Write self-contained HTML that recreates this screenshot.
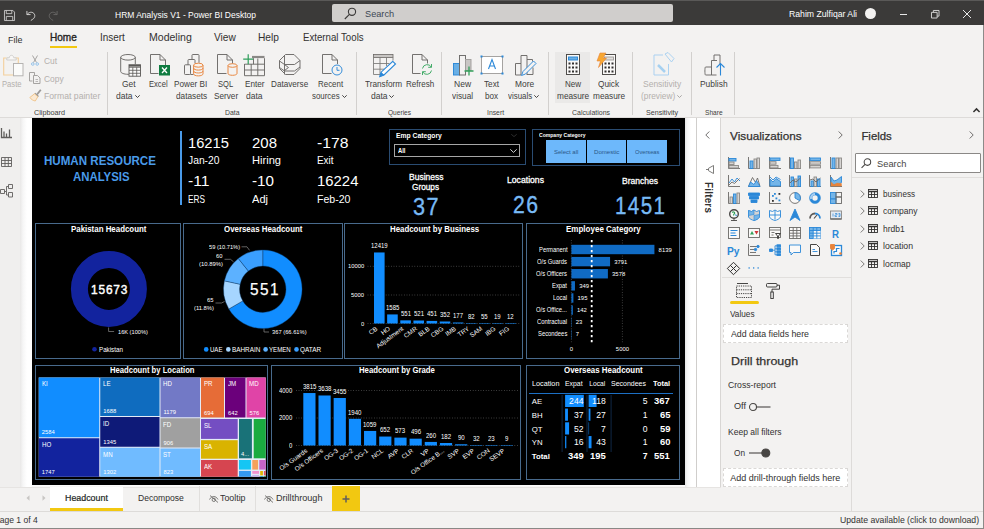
<!DOCTYPE html>
<html><head><meta charset="utf-8"><title>HRM Analysis V1 - Power BI Desktop</title>
<style>
*{box-sizing:border-box;margin:0;padding:0}
html,body{width:984px;height:529px;overflow:hidden;background:#f3f2f1;font-family:"Liberation Sans",sans-serif;color:#252423}
.a{position:absolute}
.t{position:absolute;white-space:nowrap;line-height:1;transform-origin:0 50%}
svg{position:absolute;overflow:visible}
.pn{position:absolute;border:1px solid #1d3f66}
</style></head><body>
<!-- sec_frame -->
<div class="a" style="left:0px;top:0px;width:984px;height:25px;background:#3b3a39;"></div>
<div class="a" style="left:0px;top:0px;width:984px;height:1px;background:#5a5958;"></div>
<div class="a" style="left:332px;top:4px;width:341px;height:18px;background:#d0cecc;border-radius:2px"></div>
<div class="a" style="left:0px;top:25px;width:984px;height:92px;background:#f3f2f1;"></div>
<div class="a" style="left:0px;top:117px;width:984px;height:1px;background:#dddbd9;"></div>
<div class="a" style="left:0px;top:118px;width:20px;height:369px;background:#f0efee;"></div>
<div class="a" style="left:20px;top:118px;width:12px;height:369px;background:linear-gradient(90deg,#e9e8e7 0,#f6f6f6 3px,#ffffff 7px);"></div>
<div class="a" style="left:32px;top:118px;width:653px;height:367px;background:#000;"></div>
<div class="a" style="left:685px;top:118px;width:11px;height:369px;background:linear-gradient(90deg,#e4e4e4 0,#f4f4f4 2px,#ffffff 6px);"></div>
<div class="a" style="left:32px;top:485px;width:653px;height:2px;background:linear-gradient(180deg,#fdfdfd,#f6f5f4);"></div>
<div class="a" style="left:696px;top:118px;width:24px;height:369px;background:#ffffff;border-left:1px solid #d0cecc"></div>
<div class="a" style="left:720px;top:118px;width:131px;height:393px;background:#f3f2f1;border-left:1px solid #d8d6d4"></div>
<div class="a" style="left:851px;top:118px;width:133px;height:393px;background:#f3f2f1;border-left:1px solid #dddbd9"></div>
<div class="a" style="left:0px;top:487px;width:721px;height:24px;background:#f3f2f1;"></div>
<div class="a" style="left:0px;top:511px;width:984px;height:18px;background:#f3f2f1;border-top:1px solid #dddbd9"></div>
<div class="a" style="left:0px;top:528px;width:984px;height:1px;background:#8a8886;"></div>
<div class="a" style="left:983px;top:25px;width:1px;height:504px;background:#8c8a88;"></div>
<!-- sec_title -->
<svg style="left:4px;top:9.5px" width="11" height="11" viewBox="0 0 12 12" fill="none" stroke="#d0cfce" stroke-width="0.95"><path d="M0.5 0.5h9.2l1.8 1.8v9.2h-11z"/><path d="M2.5 0.5v3.5h6v-3.5"/><path d="M2.5 11.5v-4.5h7v4.5"/></svg>
<svg style="left:26px;top:9.5px" width="10" height="11" viewBox="0 0 11 12" fill="none" stroke="#dddcdb" stroke-width="1"><path d="M1 1v4h4"/><path d="M1.2 5C3 2.2 6.5 1.6 8.5 3.6c2 2 1.3 5-1.2 6.6l-2 1.3"/></svg>
<svg style="left:48px;top:9.5px" width="10" height="11" viewBox="0 0 11 12" fill="none" stroke="#6a6968" stroke-width="1"><path d="M10 1v4h-4"/><path d="M9.8 5C8 2.2 4.5 1.6 2.5 3.6c-2 2-1.3 5 1.2 6.6l2 1.3"/></svg>
<span class="t" style="left:115.00px;top:10.00px;font-size:9.4px;color:#ffffff;transform:scaleX(0.9051);">HRM Analysis V1 - Power BI Desktop</span>
<svg style="left:344px;top:7px" width="13" height="13" viewBox="0 0 13 13" fill="none" stroke="#3b3a39" stroke-width="1.1"><circle cx="8" cy="4.8" r="3.6"/><path d="M5.4 7.4L0.8 12"/></svg>
<span class="t" style="left:365.20px;top:9.00px;font-size:9.8px;color:#3d4855;transform:scaleX(0.9388);">Search</span>
<span class="t" style="left:789.30px;top:9.00px;font-size:9.4px;color:#ffffff;transform:scaleX(0.9256);">Rahim Zulfiqar Ali</span>
<div class="a" style="left:864.8px;top:7.5px;width:11.6px;height:11.6px;border-radius:50%;background:#f3f2f1"></div>
<div class="a" style="left:900px;top:13.5px;width:7px;height:1px;background:#e8e8e8;"></div>
<svg style="left:931px;top:9.500px" width="8.500" height="8.500" viewBox="0 0 9 9" fill="none" stroke="#d8d8d8" stroke-width="1"><path d="M0.5 2.5h6v6h-6z"/><path d="M2.5 2.5v-2h6v6h-2"/></svg>
<svg style="left:963px;top:9.5px" width="8" height="8" viewBox="0 0 8 8" fill="none" stroke="#e8e8e8" stroke-width="1"><path d="M0 0L8 8M8 0L0 8"/></svg>
<span class="t" style="left:7.50px;top:35.00px;font-size:9.7px;color:#323130;transform:scaleX(0.9230);">File</span>
<span class="t" style="left:50.00px;top:33.00px;font-size:10.2px;color:#252423;transform:scaleX(0.9874);-webkit-text-stroke:0.35px #252423;">Home</span>
<div class="a" style="left:50px;top:45.5px;width:27px;height:2px;background:#f2c811;"></div>
<span class="t" style="left:100.00px;top:33.00px;font-size:10.2px;color:#323130;transform:scaleX(0.9752);">Insert</span>
<span class="t" style="left:148.50px;top:33.00px;font-size:10.2px;color:#323130;transform:scaleX(1.0337);">Modeling</span>
<span class="t" style="left:214.00px;top:33.00px;font-size:10.2px;color:#323130;">View</span>
<span class="t" style="left:258.00px;top:33.00px;font-size:10.2px;color:#323130;">Help</span>
<span class="t" style="left:303.00px;top:33.00px;font-size:10.2px;color:#323130;transform:scaleX(0.9502);">External Tools</span>
<!-- sec_ribbon -->
<svg style="left:3px;top:54px" width="21" height="23" viewBox="0 0 21 23" fill="none" stroke="#6b6967" stroke-width="0.95" ><path d="M3.500 4h-2.800v17h9.500M12.500 4h2.800v5" stroke="#f3cf9c" stroke-width="1.100"/><path d="M3.800 6v-2.200h2.400c0.300-3.300 4.300-3.300 4.600 0h2.400v2.200z" stroke="#cfcdcb" fill="#f8f7f6"/><rect x="10.500" y="9.500" width="9.500" height="12.300" stroke="#b3b1af" fill="#fbfbfa"/></svg>
<span class="t" style="left:2.00px;top:80.00px;font-size:9.3px;color:#b3b0ad;transform:scaleX(0.8244);">Paste</span>
<svg style="left:31px;top:55px" width="8" height="11" viewBox="0 0 8 11" fill="none" stroke="#6b6967" stroke-width="0.95" ><path d="M1.5 0.5l4 7M6.5 0.5l-4 7" stroke="#a19f9d"/><circle cx="1.8" cy="9" r="1.3" stroke="#8fc0ea"/><circle cx="6.2" cy="9" r="1.3" stroke="#8fc0ea"/></svg>
<span class="t" style="left:44.00px;top:57.00px;font-size:9.3px;color:#b3b0ad;transform:scaleX(0.9031);">Cut</span>
<svg style="left:29px;top:72px" width="12" height="12" viewBox="0 0 12 12" fill="none" stroke="#6b6967" stroke-width="0.95" ><path d="M0.5 0.5h5v2.5M0.5 0.5v8.5h3" stroke="#a19f9d"/><path d="M4.5 3.5h4l2.5 2.5v5.5h-6.5z" stroke="#a19f9d"/><path d="M6.5 7.5h2.5M6.5 9.5h2.5" stroke="#a19f9d" stroke-width="0.7"/></svg>
<span class="t" style="left:44.00px;top:75.00px;font-size:9.3px;color:#b3b0ad;transform:scaleX(0.9030);">Copy</span>
<svg style="left:29px;top:88.5px" width="13" height="13" viewBox="0 0 13 13" fill="none" stroke="#6b6967" stroke-width="0.95" ><path d="M11.800 0.800l-3.800 4.700" stroke="#9a9896" stroke-width="1.800"/><path d="M5.800 4.300l3.700 3.200" stroke="#9a9896" stroke-width="1.400"/><path d="M0.800 8.500l4.700-3.700 3.300 2.900-2.500 4.300c-2-0.300-4-1.500-5.500-3.500z" stroke="#f0c48a" fill="#fbe9d2"/></svg>
<span class="t" style="left:44.00px;top:92.00px;font-size:9.3px;color:#b3b0ad;transform:scaleX(0.9310);">Format painter</span>
<span class="t" style="left:34.00px;top:109.00px;font-size:7.4px;color:#403e3c;transform:scaleX(0.9821);">Clipboard</span>
<div class="a" style="left:107px;top:52px;width:1px;height:63px;background:#d2d0ce;"></div>
<div class="a" style="left:356px;top:52px;width:1px;height:63px;background:#d2d0ce;"></div>
<div class="a" style="left:441px;top:52px;width:1px;height:63px;background:#d2d0ce;"></div>
<div class="a" style="left:548px;top:52px;width:1px;height:63px;background:#d2d0ce;"></div>
<div class="a" style="left:632px;top:52px;width:1px;height:63px;background:#d2d0ce;"></div>
<div class="a" style="left:690.5px;top:52px;width:1px;height:63px;background:#d2d0ce;"></div>
<div class="a" style="left:734px;top:52px;width:1px;height:63px;background:#d2d0ce;"></div>
<svg style="left:120px;top:54px" width="21" height="23" viewBox="0 0 21 23" fill="none" stroke="#6b6967" stroke-width="0.95" ><ellipse cx="8" cy="3.300" rx="7.300" ry="2.800"/><path d="M0.700 3.300v14.200c0 1.500 3.300 2.800 7.300 2.800h0.800M15.300 3.300v7"/><rect x="9" y="10.700" width="11.500" height="11.500" fill="#fbfbfb" stroke="#5a5856" stroke-width="0.900"/><path d="M9 13.300h11.500M9 16.300h11.500M9 19.300h11.500M12.800 13.300v9M16.700 13.300v9" stroke="#5a5856" stroke-width="0.800"/><path d="M9 11.800h11.500" stroke="#5a5856" stroke-width="1.600"/></svg>
<span class="t" style="left:122.00px;top:80.00px;font-size:9.3px;color:#403e3c;transform:scaleX(0.9054);">Get</span>
<span class="t" style="left:116.00px;top:92.00px;font-size:9.3px;color:#403e3c;transform:scaleX(0.9165);">data</span>
<svg style="left:134.5px;top:95px" width="5" height="3" viewBox="0 0 5 3" fill="none" stroke="#323130" stroke-width="0.9"><path d="M0.3 0.3L2.5 2.5L4.7 0.3"/></svg>
<svg style="left:150px;top:54px" width="21" height="22" viewBox="0 0 21 22" fill="none" stroke="#6b6967" stroke-width="0.95" ><path d="M0.5 0.5h9.5l5.5 5.5v5M0.5 0.5v19h8M10 0.5v5.5h5.5"/><rect x="9" y="11" width="11" height="10.5" fill="#107c41" stroke="none"/><path d="M12 13.5l5 5.5M17 13.5l-5 5.5" stroke="#fff" stroke-width="1.3"/></svg>
<span class="t" style="left:148.50px;top:80.00px;font-size:9.3px;color:#403e3c;transform:scaleX(0.8179);">Excel</span>
<svg style="left:184px;top:54px" width="20" height="23" viewBox="0 0 20 23" fill="none" stroke="#6b6967" stroke-width="0.95" ><rect x="0.500" y="10.800" width="6" height="9.700" rx="0.800"/><path d="M4 10.800v-4.500c0-0.500 0.300-0.800 0.800-0.800h5.400c0.500 0 0.800 0.300 0.800 0.800v3"/><path d="M8 5.500v-4.200c0-0.500 0.300-0.800 0.800-0.800h5.400c0.500 0 0.800 0.300 0.800 0.800v7.500"/><path d="M6.500 20.500h3"/><ellipse cx="14.300" cy="11.200" rx="4.700" ry="2" stroke="#e8833a" fill="#f8f1ea"/><path d="M9.600 11.200v8.700c0 1.100 2.100 2 4.700 2s4.700-0.900 4.700-2v-8.700M9.600 14.100c0 1.100 2.100 2 4.700 2s4.700-0.900 4.700-2M9.600 17c0 1.100 2.100 2 4.700 2s4.700-0.900 4.700-2" stroke="#e8833a"/></svg>
<span class="t" style="left:174.00px;top:80.00px;font-size:9.3px;color:#403e3c;transform:scaleX(0.8793);">Power BI</span>
<span class="t" style="left:176.00px;top:92.00px;font-size:9.3px;color:#403e3c;transform:scaleX(0.8865);">datasets</span>
<svg style="left:217px;top:54px" width="21" height="22" viewBox="0 0 21 22" fill="none" stroke="#6b6967" stroke-width="0.95" ><path d="M0.500 0.500h9.500l5.500 5.500v3.500M0.500 0.500v19h9M10 0.500v5.500h5.500"/><ellipse cx="15.500" cy="11.500" rx="4.500" ry="1.800" stroke="#e8833a"/><path d="M11 11.500v8c0 1 2 1.800 4.500 1.800s4.500-0.800 4.500-1.800v-8" stroke="#e8833a"/></svg>
<span class="t" style="left:218.00px;top:80.00px;font-size:9.3px;color:#403e3c;transform:scaleX(0.8104);">SQL</span>
<span class="t" style="left:213.50px;top:92.00px;font-size:9.3px;color:#403e3c;transform:scaleX(0.8809);">Server</span>
<svg style="left:243px;top:53.5px" width="22" height="23" viewBox="0 0 22 23" fill="none" stroke="#6b6967" stroke-width="0.95" ><path d="M9 3h12.500" stroke="#8a8886" stroke-width="2.200"/><path d="M1.500 10v11.700h20v-17.500M1.500 10.200h20M1.500 16h20M8.200 10v11.700M14.800 4.500v17.200M10.500 4.200v6"/><path d="M5.200 0.200v10M0.200 5.200h10" stroke="#2e9e5b" stroke-width="1.200"/></svg>
<span class="t" style="left:245.00px;top:80.00px;font-size:9.3px;color:#403e3c;transform:scaleX(0.8820);">Enter</span>
<span class="t" style="left:246.00px;top:92.00px;font-size:9.3px;color:#403e3c;transform:scaleX(0.9165);">data</span>
<svg style="left:279px;top:54px" width="22" height="22" viewBox="0 0 22 22" fill="none" stroke="#6b6967" stroke-width="0.95" ><path d="M6.500 0.500h8.500l6 6v8l-6 6h-8.500l-6-6v-8z"/><path d="M0.500 7l5 3.500h10l5.500-4M0.500 13.500l5 3.500h10l5.500-4M5.500 1v19.500M5.500 10.500l4 3-4 3"/></svg>
<span class="t" style="left:271.00px;top:80.00px;font-size:9.3px;color:#403e3c;transform:scaleX(0.8776);">Dataverse</span>
<svg style="left:322px;top:54px" width="21" height="22" viewBox="0 0 21 22" fill="none" stroke="#6b6967" stroke-width="0.95" ><path d="M0.500 0.500h9.500l5.500 5.500v4M0.500 0.500v19h9M10 0.500v5.500h5.500"/><circle cx="15" cy="16" r="5" stroke="#2b88d8" fill="#f3f2f1"/><path d="M15 13v3.300h2.500" stroke="#2b88d8"/></svg>
<span class="t" style="left:318.00px;top:80.00px;font-size:9.3px;color:#403e3c;transform:scaleX(0.8530);">Recent</span>
<span class="t" style="left:312.00px;top:92.00px;font-size:9.3px;color:#403e3c;transform:scaleX(0.8491);">sources</span>
<svg style="left:341.5px;top:95px" width="5" height="3" viewBox="0 0 5 3" fill="none" stroke="#323130" stroke-width="0.9"><path d="M0.3 0.3L2.5 2.5L4.7 0.3"/></svg>
<svg style="left:373px;top:54px" width="23" height="23" viewBox="0 0 23 23" fill="none" stroke="#6b6967" stroke-width="0.95" ><rect x="0.500" y="0.500" width="19.500" height="3" fill="#c8c6c4" stroke="#6b6967" stroke-width="0.800"/><path d="M0.500 3.500v17h8.500M0.500 9.500h16M0.500 15.200h11M7 3.500v17M13.500 3.500v8.500M20 3.500v3" stroke="#7a7876" stroke-width="0.850"/><path d="M19.800 7.300l2.700 2.700-11.500 11-4.200 1.500 1.300-4.300z" stroke="#2b88d8" stroke-width="1.100" fill="#fdfdfd"/><path d="M8.100 18.200l2.900 2.800-4.200 1.500z" fill="#2b88d8" stroke="#2b88d8" stroke-width="0.600"/></svg>
<span class="t" style="left:365.00px;top:80.00px;font-size:9.3px;color:#403e3c;transform:scaleX(0.8852);">Transform</span>
<span class="t" style="left:371.00px;top:92.00px;font-size:9.3px;color:#403e3c;transform:scaleX(0.9165);">data</span>
<svg style="left:389px;top:95px" width="5" height="3" viewBox="0 0 5 3" fill="none" stroke="#323130" stroke-width="0.9"><path d="M0.3 0.3L2.5 2.5L4.7 0.3"/></svg>
<svg style="left:412px;top:54px" width="21" height="22" viewBox="0 0 21 22" fill="none" stroke="#6b6967" stroke-width="0.95" ><path d="M0.500 0.500h9.500l5.500 5.500v3.500M0.500 0.500v19h8M10 0.500v5.500h5.500"/><path d="M10.500 14.500a4.700 4.700 0 0 1 8.700-1.500M19.500 16.500a4.700 4.700 0 0 1-8.700 1.500M19.500 10v3.300h-3.300M10.500 21v-3.300h3.300" stroke="#3aa862" stroke-width="0.950"/></svg>
<span class="t" style="left:406.00px;top:80.00px;font-size:9.3px;color:#403e3c;transform:scaleX(0.8645);">Refresh</span>
<span class="t" style="left:225.00px;top:109.00px;font-size:7.4px;color:#403e3c;transform:scaleX(0.9308);">Data</span>
<span class="t" style="left:388.00px;top:109.00px;font-size:7.4px;color:#403e3c;transform:scaleX(0.8907);">Queries</span>
<svg style="left:453px;top:54px" width="21" height="22" viewBox="0 0 21 22" fill="none" stroke="#6b6967" stroke-width="0.95" ><rect x="0.500" y="9.500" width="6" height="11.500" fill="#69afe5" stroke="#2b88d8"/><rect x="6.500" y="1.500" width="6" height="19.500" fill="#f3f2f1"/><rect x="12.500" y="5.500" width="5.500" height="11" fill="#c8c6c4" stroke="#a19f9d"/><path d="M16 12.500v9M11.500 17h9" stroke="#33a05a" stroke-width="1.300"/></svg>
<span class="t" style="left:454.00px;top:80.00px;font-size:9.3px;color:#403e3c;transform:scaleX(0.9187);">New</span>
<span class="t" style="left:452.00px;top:92.00px;font-size:9.3px;color:#403e3c;transform:scaleX(0.8880);">visual</span>
<svg style="left:480px;top:55px" width="24" height="20" viewBox="0 0 24 20" fill="none" stroke="#6b6967" stroke-width="0.95" ><rect x="1.500" y="1.500" width="21" height="17" fill="#fff" stroke="#a19f9d"/><path d="M8.500 14l3.500-9.500 3.500 9.500M9.700 11h4.600" stroke="#2b88d8" stroke-width="1.100"/><g fill="#2b88d8" stroke="none"><rect x="0.500" y="0.500" width="2" height="2"/><rect x="21.500" y="0.500" width="2" height="2"/><rect x="0.500" y="17.500" width="2" height="2"/><rect x="21.500" y="17.500" width="2" height="2"/></g></svg>
<span class="t" style="left:484.00px;top:80.00px;font-size:9.3px;color:#403e3c;transform:scaleX(0.8842);">Text</span>
<span class="t" style="left:485.00px;top:92.00px;font-size:9.3px;color:#403e3c;transform:scaleX(0.8717);">box</span>
<svg style="left:515px;top:54px" width="22" height="22" viewBox="0 0 22 22" fill="none" stroke="#6b6967" stroke-width="0.95" ><path d="M0.500 9.500h5.500v11.500h-5.500zM6 9.500v-8h6v19.500M12 5.500h5.500v2"/><path d="M18.500 7l2.500 2.500-10.500 10.500-4 1.500 1.500-4z" stroke="#2b88d8" fill="#f3f2f1"/><path d="M12 20.500h6v-7" /></svg>
<span class="t" style="left:515.00px;top:80.00px;font-size:9.3px;color:#403e3c;transform:scaleX(0.9016);">More</span>
<span class="t" style="left:508.00px;top:92.00px;font-size:9.3px;color:#403e3c;transform:scaleX(0.8489);">visuals</span>
<svg style="left:533.5px;top:95px" width="5" height="3" viewBox="0 0 5 3" fill="none" stroke="#323130" stroke-width="0.9"><path d="M0.3 0.3L2.5 2.5L4.7 0.3"/></svg>
<span class="t" style="left:487.00px;top:109.00px;font-size:7.4px;color:#403e3c;transform:scaleX(0.9217);">Insert</span>
<div class="a" style="left:555px;top:52px;width:35px;height:51px;background:#eae9e8;"></div>
<svg style="left:566px;top:54px" width="14" height="21" viewBox="0 0 14 21" fill="none" stroke="#6b6967" stroke-width="0.95" ><rect x="0.500" y="0.500" width="13" height="20" fill="#faf9f8" stroke="#484644"/><rect x="2.500" y="3" width="9" height="3" fill="#69afe5" stroke="#2b88d8"/><g fill="#323130" stroke="none"><rect x="2.500" y="8.500" width="2" height="2"/><rect x="6" y="8.500" width="2" height="2"/><rect x="9.500" y="8.500" width="2" height="2"/><rect x="2.500" y="12.500" width="2" height="2"/><rect x="6" y="12.500" width="2" height="2"/><rect x="9.500" y="12.500" width="2" height="2"/><rect x="2.500" y="16.500" width="2" height="2"/><rect x="6" y="16.500" width="2" height="2"/><rect x="9.500" y="16.500" width="2" height="2"/></g></svg>
<span class="t" style="left:565.00px;top:80.00px;font-size:9.3px;color:#403e3c;transform:scaleX(0.8647);">New</span>
<span class="t" style="left:557.00px;top:92.00px;font-size:9.3px;color:#403e3c;transform:scaleX(0.8892);">measure</span>
<svg style="left:602px;top:54px" width="14" height="21" viewBox="0 0 14 21" fill="none" stroke="#6b6967" stroke-width="0.95" ><rect x="0.500" y="0.500" width="13" height="20" fill="#faf9f8" stroke="#484644"/><rect x="2.500" y="3" width="9" height="3" fill="#e1dfdd" stroke="#a19f9d"/><g fill="#323130" stroke="none"><rect x="2.500" y="8.500" width="2" height="2"/><rect x="6" y="8.500" width="2" height="2"/><rect x="9.500" y="8.500" width="2" height="2"/><rect x="2.500" y="12.500" width="2" height="2"/><rect x="6" y="12.500" width="2" height="2"/><rect x="9.500" y="12.500" width="2" height="2"/><rect x="2.500" y="16.500" width="2" height="2"/><rect x="6" y="16.500" width="2" height="2"/><rect x="9.500" y="16.500" width="2" height="2"/></g></svg>
<svg style="left:596px;top:53px" width="11" height="15" viewBox="0 0 11 15" fill="none" stroke="#6b6967" stroke-width="0.95" ><path d="M4 0h6l-3 5h3.500l-8 9.500 2-6.500h-3.500z" fill="#f7a833" stroke="#e8833a" stroke-width="0.600"/></svg>
<span class="t" style="left:598.00px;top:80.00px;font-size:9.3px;color:#403e3c;transform:scaleX(0.8882);">Quick</span>
<span class="t" style="left:593.00px;top:92.00px;font-size:9.3px;color:#403e3c;transform:scaleX(0.8892);">measure</span>
<span class="t" style="left:572.00px;top:109.00px;font-size:7.4px;color:#403e3c;transform:scaleX(0.9459);">Calculations</span>
<svg style="left:653px;top:53px" width="22" height="23" viewBox="0 0 22 23" fill="none" stroke="#6b6967" stroke-width="0.95" ><path d="M1 2h9M1 2v20h14.500v-11" stroke="#a6d0f0"/><path d="M12 1l3-1.500 6 6-2.500 3.500z" stroke="#a6d0f0"/><path d="M5 12l7 7" stroke="#a6d0f0" stroke-width="2.500"/></svg>
<span class="t" style="left:643.00px;top:80.00px;font-size:9.3px;color:#b3b0ad;transform:scaleX(0.9126);">Sensitivity</span>
<span class="t" style="left:640.50px;top:92.00px;font-size:9.3px;color:#b3b0ad;transform:scaleX(0.8940);">(preview)</span>
<svg style="left:677px;top:95px" width="5" height="3" viewBox="0 0 5 3" fill="none" stroke="#a19f9d" stroke-width="0.9"><path d="M0.3 0.3L2.5 2.5L4.7 0.3"/></svg>
<span class="t" style="left:646.00px;top:109.00px;font-size:7.4px;color:#403e3c;transform:scaleX(0.9639);">Sensitivity</span>
<svg style="left:705px;top:54px" width="21" height="22" viewBox="0 0 21 22" fill="none" stroke="#6b6967" stroke-width="0.95" ><path d="M0.500 13h6v8h-6c-0.800 0-0.800-8 0-8zM6.500 13v-6.500h5.500M9 6.500v-5.500h6v9M6.500 21h5"/><path d="M15.500 21.500v-12M11.500 13.500l4-4 4 4" stroke="#2b88d8" stroke-width="1.100"/></svg>
<span class="t" style="left:699.50px;top:80.00px;font-size:9.3px;color:#403e3c;transform:scaleX(0.9065);">Publish</span>
<span class="t" style="left:704.50px;top:109.00px;font-size:7.4px;color:#403e3c;transform:scaleX(0.8892);">Share</span>
<svg style="left:973.300px;top:107.800px" width="7" height="4.400" viewBox="0 0 8 5" fill="none" stroke="#323130" stroke-width="1.700"><path d="M0.500 4.500L4 1l3.500 3.500"/></svg>
<!-- sec_dash1 -->
<svg style="left:1px;top:128px" width="11" height="10" viewBox="0 0 11 10" fill="none" stroke="#5f5d5b" stroke-width="1"><path d="M0.500 0v9.500h10.500M3 9.500v-6M5.500 9.500v-4M8.500 9.500v-8" stroke-width="1.300"/></svg>
<svg style="left:1px;top:157px" width="11" height="10" viewBox="0 0 11 10" fill="none" stroke="#605e5c" stroke-width="0.900"><path d="M0.500 0.500h10v9h-10zM0.500 3.500h10M0.500 6.500h10M4 0.500v9M7.300 0.500v9"/></svg>
<svg style="left:0px;top:184px" width="13" height="14" viewBox="0 0 13 14" fill="none" stroke="#605e5c" stroke-width="0.900"><path d="M0.500 5.500h4v4h-4zM8.500 0.500h4v4h-4zM8.500 8.500h4v4.500h-4zM4.500 7.500h2v-5h2M6.500 7.500v3.500h2"/></svg>
<span class="t" style="left:43.75px;top:155.00px;font-size:12.2px;color:#4a9bea;font-weight:bold;transform:scaleX(0.9501);">HUMAN RESOURCE</span>
<span class="t" style="left:73.25px;top:171.00px;font-size:12.2px;color:#4a9bea;font-weight:bold;transform:scaleX(0.9333);">ANALYSIS</span>
<div class="a" style="left:180.3px;top:131px;width:2px;height:73.5px;background:#4a9bea;"></div>
<span class="t" style="left:187.50px;top:136.00px;font-size:14.6px;color:#fff;transform:scaleX(1.0083);">16215</span>
<span class="t" style="left:187.50px;top:155.00px;font-size:11px;color:#fff;transform:scaleX(0.9366);">Jan-20</span>
<span class="t" style="left:187.50px;top:174.00px;font-size:14.6px;color:#fff;transform:scaleX(1.0723);">-11</span>
<span class="t" style="left:187.50px;top:194.00px;font-size:11px;color:#fff;transform:scaleX(0.7516);">ERS</span>
<span class="t" style="left:251.50px;top:136.00px;font-size:14.6px;color:#fff;transform:scaleX(1.0247);">208</span>
<span class="t" style="left:251.50px;top:155.00px;font-size:11px;color:#fff;transform:scaleX(1.0094);">Hiring</span>
<span class="t" style="left:251.50px;top:174.00px;font-size:14.6px;color:#fff;transform:scaleX(1.0408);">-10</span>
<span class="t" style="left:251.50px;top:194.00px;font-size:11px;color:#fff;transform:scaleX(1.0064);">Adj</span>
<span class="t" style="left:316.50px;top:136.00px;font-size:14.6px;color:#fff;transform:scaleX(1.0762);">-178</span>
<span class="t" style="left:316.50px;top:155.00px;font-size:11px;color:#fff;transform:scaleX(0.8998);">Exit</span>
<span class="t" style="left:316.50px;top:174.00px;font-size:14.6px;color:#fff;transform:scaleX(1.0206);">16224</span>
<span class="t" style="left:316.50px;top:194.00px;font-size:11px;color:#fff;transform:scaleX(0.9612);">Feb-20</span>
<div class="a" style="left:389px;top:129px;width:137px;height:35.500px;border:1px solid #2a4c72"></div>
<span class="t" style="left:396.00px;top:133.00px;font-size:6.8px;color:#fff;font-weight:bold;transform:scaleX(0.9943);">Emp Category</span>
<svg style="left:511px;top:133.500px" width="6" height="3" viewBox="0 0 6 3" fill="none" stroke="#3a3a3a" stroke-width="0.800"><path d="M0.300 0.300L3 2.600L5.700 0.300"/></svg>
<div class="a" style="left:394.300px;top:143.800px;width:125.700px;height:13.400px;border:1px solid #a6a6a6"></div>
<span class="t" style="left:398.20px;top:148.00px;font-size:6.5px;color:#fff;font-weight:bold;transform:scaleX(0.9029);">All</span>
<svg style="left:509.500px;top:148.500px" width="7" height="4" viewBox="0 0 7 4" fill="none" stroke="#e8e8e8" stroke-width="0.900"><path d="M0.300 0.300L3.500 3.400L6.700 0.300"/></svg>
<div class="a" style="left:532px;top:129px;width:148px;height:37.300px;border:1px solid #2a4c72"></div>
<span class="t" style="left:539.00px;top:133.00px;font-size:5px;color:#fff;font-weight:bold;transform:scaleX(1.0142);">Company Category</span>
<div class="a" style="left:546px;top:140px;width:40px;height:23.3px;background:#6db8fb;"></div>
<span class="t" style="left:553.75px;top:150.00px;font-size:5.6px;color:#2b5787;transform:scaleX(1.0733);">Select all</span>
<div class="a" style="left:586.8px;top:140px;width:39.7px;height:23.3px;background:#6db8fb;"></div>
<span class="t" style="left:593.90px;top:150.00px;font-size:5.6px;color:#2b5787;transform:scaleX(1.0877);">Domestic</span>
<div class="a" style="left:627.3px;top:140px;width:39.7px;height:23.3px;background:#6db8fb;"></div>
<span class="t" style="left:634.90px;top:150.00px;font-size:5.6px;color:#2b5787;transform:scaleX(1.0178);">Overseas</span>
<span class="t" style="left:408.75px;top:173.00px;font-size:8.4px;color:#fff;transform:scaleX(1.0152);-webkit-text-stroke:0.280px #fff;">Business</span>
<span class="t" style="left:412.20px;top:183.00px;font-size:8.4px;color:#fff;transform:scaleX(0.9831);-webkit-text-stroke:0.280px #fff;">Groups</span>
<span class="t" style="left:413.25px;top:195.00px;font-size:24px;color:#78baf5;transform:scaleX(0.9012);-webkit-text-stroke:0.350px #78baf5;letter-spacing:1.6px;">37</span>
<span class="t" style="left:506.90px;top:176.00px;font-size:8.4px;color:#fff;transform:scaleX(1.0320);-webkit-text-stroke:0.280px #fff;">Locations</span>
<span class="t" style="left:513.00px;top:193.00px;font-size:24px;color:#78baf5;transform:scaleX(0.8835);-webkit-text-stroke:0.350px #78baf5;letter-spacing:1.6px;">26</span>
<span class="t" style="left:622.00px;top:177.00px;font-size:8.4px;color:#fff;transform:scaleX(1.0174);-webkit-text-stroke:0.280px #fff;">Branches</span>
<span class="t" style="left:614.60px;top:194.00px;font-size:24px;color:#78baf5;transform:scaleX(0.8592);-webkit-text-stroke:0.350px #78baf5;letter-spacing:1.6px;">1451</span>
<!-- sec_dash2 -->
<div class="a" style="left:35px;top:223px;width:146px;height:136px;border:1px solid #486a8c"></div>
<span class="t" style="left:71.40px;top:225.00px;font-size:8.3px;color:#fff;font-weight:bold;transform:scaleX(0.9512);">Pakistan Headcount</span>
<svg style="left:0;top:0" width="984" height="529"><circle cx="108.900" cy="289" r="29.500" fill="none" stroke="#12239e" stroke-width="17"/><path d="M108.600 327.500v4h5.500" fill="none" stroke="#8a8a8a" stroke-width="0.700"/><circle cx="94.500" cy="349.300" r="2.300" fill="#12239e"/></svg>
<span class="t" style="left:90.65px;top:284.00px;font-size:12.6px;color:#fff;transform:scaleX(0.9430);-webkit-text-stroke:0.45px #fff;letter-spacing:0.9px;">15673</span>
<span class="t" style="left:117.70px;top:330.00px;font-size:5.6px;color:#fff;transform:scaleX(1.0099);">16K (100%)</span>
<span class="t" style="left:99.00px;top:347.00px;font-size:6.6px;color:#fff;transform:scaleX(0.9446);">Pakistan</span>
<div class="a" style="left:183px;top:223px;width:160px;height:136px;border:1px solid #486a8c"></div>
<span class="t" style="left:224.20px;top:225.00px;font-size:8.3px;color:#fff;font-weight:bold;transform:scaleX(0.9504);">Overseas Headcount</span>
<svg style="left:0;top:0" width="984" height="529"><path d="M262.80 249.90A39.3 39.3 0 1 1 228.84 308.98L242.75 300.88A23.2 23.2 0 1 0 262.80 266.00Z" fill="#118dff" stroke="#0b3d6e" stroke-width="0.400"/><path d="M228.84 308.98A39.3 39.3 0 0 1 224.39 280.86L240.13 284.28A23.2 23.2 0 0 0 242.75 300.88Z" fill="#a6d5ff" stroke="#0b3d6e" stroke-width="0.400"/><path d="M224.39 280.86A39.3 39.3 0 0 1 238.31 258.46L248.34 271.06A23.2 23.2 0 0 0 240.13 284.28Z" fill="#5cb1ff" stroke="#0b3d6e" stroke-width="0.400"/><path d="M238.31 258.46A39.3 39.3 0 0 1 262.80 249.90L262.80 266.00A23.2 23.2 0 0 0 248.34 271.06Z" fill="#3a9fff" stroke="#0b3d6e" stroke-width="0.400"/><g fill="none" stroke="#8a8a8a" stroke-width="0.700"><path d="M241.500 246.800h5.500l2.500 3.500"/><path d="M224.500 259.300h6l3 2.500"/><path d="M215.500 303h6l3-1.500"/><path d="M264 328.500v3.500h5"/></g><circle cx="206.2" cy="349.400" r="2.300" fill="#118dff"/><circle cx="228.3" cy="349.400" r="2.300" fill="#a6d5ff"/><circle cx="265.6" cy="349.400" r="2.300" fill="#5cb1ff"/><circle cx="296.5" cy="349.400" r="2.300" fill="#3a9fff"/></svg>
<span class="t" style="left:250.45px;top:281.00px;font-size:17.3px;color:#fff;transform:scaleX(0.8911);-webkit-text-stroke:0.25px #fff;letter-spacing:1.6px;">551</span>
<span class="t" style="left:209.00px;top:245.00px;font-size:5.6px;color:#fff;transform:scaleX(1.0181);">59 (10.71%)</span>
<span class="t" style="left:215.75px;top:254.00px;font-size:5.6px;color:#fff;transform:scaleX(1.0387);">60</span>
<span class="t" style="left:198.80px;top:262.00px;font-size:5.6px;color:#fff;transform:scaleX(1.0514);">(10.89%)</span>
<span class="t" style="left:207.15px;top:298.00px;font-size:5.6px;color:#fff;transform:scaleX(1.0387);">65</span>
<span class="t" style="left:193.80px;top:306.00px;font-size:5.6px;color:#fff;transform:scaleX(1.0374);">(11.8%)</span>
<span class="t" style="left:271.70px;top:330.00px;font-size:5.6px;color:#fff;transform:scaleX(1.0303);">367 (66.61%)</span>
<span class="t" style="left:209.50px;top:347.00px;font-size:6.6px;color:#fff;transform:scaleX(0.9177);">UAE</span>
<span class="t" style="left:231.60px;top:347.00px;font-size:6.6px;color:#fff;transform:scaleX(0.9644);">BAHRAIN</span>
<span class="t" style="left:269.20px;top:347.00px;font-size:6.6px;color:#fff;transform:scaleX(0.9254);">YEMEN</span>
<span class="t" style="left:299.80px;top:347.00px;font-size:6.6px;color:#fff;transform:scaleX(0.9709);">QATAR</span>
<div class="a" style="left:344px;top:223px;width:179px;height:136px;border:1px solid #486a8c"></div>
<span class="t" style="left:389.65px;top:225.00px;font-size:8.3px;color:#fff;font-weight:bold;transform:scaleX(0.9485);">Headcount by Business</span>
<svg style="left:0;top:0" width="984" height="529"><g stroke="#6a6a6a" stroke-width="0.700" stroke-dasharray="0.800 1.800"><path d="M367.600 266.3H521"/><path d="M367.600 295H521"/><path d="M367.600 323.5H521"/></g><rect x="374.00" y="252.46" width="10.6" height="71.04" fill="#118dff"/><rect x="387.14" y="314.43" width="10.6" height="9.07" fill="#118dff"/><rect x="400.28" y="320.35" width="10.6" height="3.15" fill="#118dff"/><rect x="413.42" y="320.52" width="10.6" height="2.98" fill="#118dff"/><rect x="426.56" y="320.92" width="10.6" height="2.58" fill="#118dff"/><rect x="439.70" y="321.49" width="10.6" height="2.01" fill="#118dff"/><rect x="452.84" y="322.49" width="10.6" height="1.01" fill="#118dff"/><rect x="465.98" y="323.00" width="10.6" height="0.50" fill="#118dff"/><rect x="479.12" y="323.00" width="10.6" height="0.50" fill="#118dff"/><rect x="492.26" y="323.00" width="10.6" height="0.50" fill="#118dff"/><rect x="505.40" y="323.00" width="10.6" height="0.50" fill="#118dff"/></svg>
<span class="t" style="left:370.98px;top:243.00px;font-size:6.5px;color:#fff;transform:scaleX(0.9200);">12419</span>
<span class="t" style="left:385.79px;top:305.00px;font-size:6.5px;color:#fff;transform:scaleX(0.9200);">1585</span>
<span class="t" style="left:400.59px;top:311.00px;font-size:6.5px;color:#fff;transform:scaleX(0.9200);">551</span>
<span class="t" style="left:413.73px;top:311.00px;font-size:6.5px;color:#fff;transform:scaleX(0.9200);">521</span>
<span class="t" style="left:426.87px;top:311.00px;font-size:6.5px;color:#fff;transform:scaleX(0.9200);">451</span>
<span class="t" style="left:440.01px;top:312.00px;font-size:6.5px;color:#fff;transform:scaleX(0.9200);">352</span>
<span class="t" style="left:453.15px;top:313.00px;font-size:6.5px;color:#fff;transform:scaleX(0.9200);">177</span>
<span class="t" style="left:467.95px;top:314.00px;font-size:6.5px;color:#fff;transform:scaleX(0.9200);">82</span>
<span class="t" style="left:481.09px;top:314.00px;font-size:6.5px;color:#fff;transform:scaleX(0.9200);">55</span>
<span class="t" style="left:494.23px;top:314.00px;font-size:6.5px;color:#fff;transform:scaleX(0.9200);">19</span>
<span class="t" style="left:507.37px;top:314.00px;font-size:6.5px;color:#fff;transform:scaleX(0.9200);">12</span>
<span class="t" style="left:347.96px;top:263.00px;font-size:6.2px;color:#fff;transform:scaleX(0.9400);">10000</span>
<span class="t" style="left:351.23px;top:292.00px;font-size:6.2px;color:#fff;transform:scaleX(0.9400);">5000</span>
<span class="t" style="left:361.03px;top:321.00px;font-size:6.2px;color:#fff;transform:scaleX(0.9400);">0</span>
<span class="t" style="left:367.94px;top:325.30px;font-size:6.400px;color:#fff;transform-origin:100% 50%;transform:rotate(-36deg)">CB</span>
<span class="t" style="left:380.38px;top:325.30px;font-size:6.400px;color:#fff;transform-origin:100% 50%;transform:rotate(-36deg)">HO</span>
<span class="t" style="left:371.19px;top:325.30px;font-size:6.400px;color:#fff;transform-origin:100% 50%;transform:rotate(-36deg)">Adjustment</span>
<span class="t" style="left:401.70px;top:325.30px;font-size:6.400px;color:#fff;transform-origin:100% 50%;transform:rotate(-36deg)">CMR</span>
<span class="t" style="left:417.31px;top:325.30px;font-size:6.400px;color:#fff;transform-origin:100% 50%;transform:rotate(-36deg)">BLB</span>
<span class="t" style="left:428.69px;top:325.30px;font-size:6.400px;color:#fff;transform-origin:100% 50%;transform:rotate(-36deg)">CBG</span>
<span class="t" style="left:444.31px;top:325.30px;font-size:6.400px;color:#fff;transform-origin:100% 50%;transform:rotate(-36deg)">IMB</span>
<span class="t" style="left:456.15px;top:325.30px;font-size:6.400px;color:#fff;transform-origin:100% 50%;transform:rotate(-36deg)">TRY</span>
<span class="t" style="left:468.11px;top:325.30px;font-size:6.400px;color:#fff;transform-origin:100% 50%;transform:rotate(-36deg)">SAM</span>
<span class="t" style="left:484.08px;top:325.30px;font-size:6.400px;color:#fff;transform-origin:100% 50%;transform:rotate(-36deg)">IBG</span>
<span class="t" style="left:497.58px;top:325.30px;font-size:6.400px;color:#fff;transform-origin:100% 50%;transform:rotate(-36deg)">FIG</span>
<div class="a" style="left:526px;top:223px;width:154px;height:136px;border:1px solid #486a8c"></div>
<span class="t" style="left:566.00px;top:225.00px;font-size:8.3px;color:#fff;font-weight:bold;transform:scaleX(0.9659);">Employee Category</span>
<svg style="left:0;top:0" width="984" height="529"><g stroke="#6a6a6a" stroke-width="0.700" stroke-dasharray="0.800 1.800"><path d="M571.400 240V344M622.400 240V344"/></g><rect x="571.4" y="244.80" width="83.02" height="9.400" fill="#106bc4"/><rect x="571.4" y="256.92" width="38.67" height="9.400" fill="#106bc4"/><rect x="571.4" y="269.04" width="36.50" height="9.400" fill="#106bc4"/><rect x="571.4" y="281.16" width="3.56" height="9.400" fill="#106bc4"/><rect x="571.4" y="293.28" width="1.99" height="9.400" fill="#106bc4"/><rect x="571.4" y="305.40" width="1.45" height="9.400" fill="#106bc4"/><rect x="571.4" y="317.52" width="0.40" height="9.400" fill="#106bc4"/><rect x="571.4" y="329.64" width="0.40" height="9.400" fill="#106bc4"/><path d="M591.700 240V344" stroke="#fff" stroke-width="1.800" stroke-dasharray="2.200 2.800"/></svg>
<span class="t" style="left:538.56px;top:247.00px;font-size:6.3px;color:#fff;transform:scaleX(0.9300);">Permanent</span>
<span class="t" style="left:658.62px;top:248.00px;font-size:5.9px;color:#fff;">8139</span>
<span class="t" style="left:537.28px;top:259.00px;font-size:6.3px;color:#fff;transform:scaleX(0.9300);">O/s Guards</span>
<span class="t" style="left:614.27px;top:260.00px;font-size:5.9px;color:#fff;">3791</span>
<span class="t" style="left:536.42px;top:271.00px;font-size:6.3px;color:#fff;transform:scaleX(0.9300);">O/s Officers</span>
<span class="t" style="left:612.10px;top:272.00px;font-size:5.9px;color:#fff;">3578</span>
<span class="t" style="left:552.14px;top:283.00px;font-size:6.3px;color:#fff;transform:scaleX(0.9300);">Expat</span>
<span class="t" style="left:579.16px;top:284.00px;font-size:5.9px;color:#fff;">349</span>
<span class="t" style="left:553.10px;top:295.00px;font-size:6.3px;color:#fff;transform:scaleX(0.9300);">Local</span>
<span class="t" style="left:577.59px;top:296.00px;font-size:5.9px;color:#fff;">195</span>
<span class="t" style="left:536.42px;top:307.00px;font-size:6.3px;color:#fff;transform:scaleX(0.9300);">O/s Office...</span>
<span class="t" style="left:577.05px;top:308.00px;font-size:5.9px;color:#fff;">142</span>
<span class="t" style="left:537.27px;top:319.00px;font-size:6.3px;color:#fff;transform:scaleX(0.9300);">Contractual</span>
<span class="t" style="left:575.83px;top:320.00px;font-size:5.9px;color:#fff;">23</span>
<span class="t" style="left:537.91px;top:331.00px;font-size:6.3px;color:#fff;transform:scaleX(0.9300);">Secondees</span>
<span class="t" style="left:575.67px;top:332.00px;font-size:5.9px;color:#fff;">7</span>
<span class="t" style="left:569.77px;top:347.00px;font-size:5.9px;color:#fff;">0</span>
<span class="t" style="left:615.86px;top:347.00px;font-size:5.9px;color:#fff;">5000</span>
<!-- sec_dash3 -->
<div class="a" style="left:35px;top:365px;width:233px;height:115px;border:1px solid #486a8c"></div>
<span class="t" style="left:109.50px;top:366.00px;font-size:8.3px;color:#fff;font-weight:bold;transform:scaleX(0.9209);">Headcount by Location</span>
<svg style="left:0;top:0" width="984" height="529"><rect x="38.750" y="377.500" width="227" height="99.250" fill="#e4ebf6"/><rect x="38.75" y="377.5" width="60.50" height="59.75" fill="#118dff"/><rect x="38.75" y="438.25" width="60.50" height="38.50" fill="#12239e"/><rect x="100.25" y="377.5" width="59.25" height="38.50" fill="#0f6cbf"/><rect x="100.25" y="417" width="59.25" height="29.75" fill="#0e1a78"/><rect x="100.25" y="447.75" width="59.25" height="29.00" fill="#70bbff"/><rect x="160.5" y="377.5" width="39.50" height="39.75" fill="#7279c6"/><rect x="160.5" y="418.25" width="39.50" height="29.25" fill="#a0a0a0"/><rect x="160.5" y="448.5" width="39.50" height="28.25" fill="#70bbff"/><rect x="201" y="377.5" width="23.00" height="40.00" fill="#e66c37"/><rect x="225" y="377.5" width="20.50" height="40.00" fill="#6b007b"/><rect x="246.5" y="377.5" width="19.25" height="40.00" fill="#e044a7"/><rect x="201" y="419" width="36.70" height="19.90" fill="#744ec2"/><rect x="201" y="440.2" width="36.70" height="18.50" fill="#d9b300"/><rect x="201" y="460" width="36.70" height="16.75" fill="#d64550"/><rect x="239" y="419" width="12.90" height="39.30" fill="#197278"/><rect x="253.7" y="419" width="12.05" height="39.30" fill="#1aab40"/><rect x="239" y="460" width="11.90" height="9.60" fill="#15c6f4"/><rect x="252.3" y="460" width="5.80" height="9.60" fill="#f5a25d"/><rect x="259.3" y="460" width="6.45" height="9.60" fill="#c564c8"/><rect x="239" y="470.9" width="11.90" height="5.85" fill="#3599f0"/><rect x="252.3" y="471" width="6.70" height="2.80" fill="#f291cf"/><rect x="252.3" y="474.9" width="6.70" height="1.85" fill="#c9b5ee"/><rect x="260.2" y="471" width="2.70" height="4.40" fill="#e0b400"/><rect x="260.2" y="476" width="2.70" height="0.75" fill="#15a6e0"/><rect x="263.9" y="471" width="1.85" height="4.40" fill="#e05560"/><rect x="263.9" y="476" width="1.85" height="0.75" fill="#30b050"/></svg>
<span class="t" style="left:41.55px;top:380.00px;font-size:7px;color:#fff;transform:scaleX(0.8800);">KI</span>
<span class="t" style="left:41.75px;top:430.00px;font-size:5.8px;color:#fff;">2584</span>
<span class="t" style="left:41.55px;top:441.00px;font-size:7px;color:#fff;transform:scaleX(0.8800);">HO</span>
<span class="t" style="left:41.75px;top:470.00px;font-size:5.8px;color:#fff;">1747</span>
<span class="t" style="left:103.05px;top:380.00px;font-size:7px;color:#fff;transform:scaleX(0.8800);">LE</span>
<span class="t" style="left:103.25px;top:409.00px;font-size:5.8px;color:#fff;">1688</span>
<span class="t" style="left:103.05px;top:420.00px;font-size:7px;color:#fff;transform:scaleX(0.8800);">ID</span>
<span class="t" style="left:103.25px;top:440.00px;font-size:5.8px;color:#fff;">1345</span>
<span class="t" style="left:103.05px;top:451.00px;font-size:7px;color:#fff;transform:scaleX(0.8800);">MN</span>
<span class="t" style="left:103.25px;top:470.00px;font-size:5.8px;color:#fff;">1302</span>
<span class="t" style="left:163.30px;top:380.00px;font-size:7px;color:#fff;transform:scaleX(0.8800);">HD</span>
<span class="t" style="left:163.50px;top:410.00px;font-size:5.8px;color:#fff;">1179</span>
<span class="t" style="left:163.30px;top:421.00px;font-size:7px;color:#fff;transform:scaleX(0.8800);">FD</span>
<span class="t" style="left:163.50px;top:441.00px;font-size:5.8px;color:#fff;">906</span>
<span class="t" style="left:163.30px;top:451.00px;font-size:7px;color:#fff;transform:scaleX(0.8800);">ST</span>
<span class="t" style="left:163.50px;top:470.00px;font-size:5.8px;color:#fff;">823</span>
<span class="t" style="left:203.80px;top:380.00px;font-size:7px;color:#fff;transform:scaleX(0.8800);">PR</span>
<span class="t" style="left:204.00px;top:411.00px;font-size:5.8px;color:#fff;">694</span>
<span class="t" style="left:227.80px;top:380.00px;font-size:7px;color:#fff;transform:scaleX(0.8800);">JM</span>
<span class="t" style="left:228.00px;top:411.00px;font-size:5.8px;color:#fff;">642</span>
<span class="t" style="left:249.30px;top:380.00px;font-size:7px;color:#fff;transform:scaleX(0.8800);">MD</span>
<span class="t" style="left:249.50px;top:411.00px;font-size:5.8px;color:#fff;">576</span>
<span class="t" style="left:203.80px;top:422.00px;font-size:7px;color:#fff;transform:scaleX(0.8800);">SL</span>
<span class="t" style="left:203.80px;top:443.00px;font-size:7px;color:#fff;transform:scaleX(0.8800);">SA</span>
<span class="t" style="left:203.80px;top:463.00px;font-size:7px;color:#fff;transform:scaleX(0.8800);">AK</span>
<span class="t" style="left:241.00px;top:452.00px;font-size:5.8px;color:#fff;">4...</span>
<div class="a" style="left:271px;top:365px;width:250px;height:115px;border:1px solid #486a8c"></div>
<span class="t" style="left:358.75px;top:366.00px;font-size:8.3px;color:#fff;font-weight:bold;transform:scaleX(0.9358);">Headcount by Grade</span>
<svg style="left:0;top:0" width="984" height="529"><g stroke="#6a6a6a" stroke-width="0.700" stroke-dasharray="0.800 1.800"><path d="M296 390.5H519"/><path d="M296 418H519"/><path d="M296 445.5H519"/></g><rect x="303.30" y="393.04" width="12.2" height="52.46" fill="#118dff"/><rect x="318.48" y="395.48" width="12.2" height="50.02" fill="#118dff"/><rect x="333.66" y="397.99" width="12.2" height="47.51" fill="#118dff"/><rect x="348.84" y="418.82" width="12.2" height="26.68" fill="#118dff"/><rect x="364.02" y="430.94" width="12.2" height="14.56" fill="#118dff"/><rect x="379.20" y="436.54" width="12.2" height="8.96" fill="#118dff"/><rect x="394.38" y="437.62" width="12.2" height="7.88" fill="#118dff"/><rect x="409.56" y="438.68" width="12.2" height="6.82" fill="#118dff"/><rect x="424.74" y="441.93" width="12.2" height="3.58" fill="#118dff"/><rect x="439.92" y="443.00" width="12.2" height="2.50" fill="#118dff"/><rect x="455.10" y="444.26" width="12.2" height="1.24" fill="#118dff"/><rect x="470.28" y="445.00" width="12.2" height="0.50" fill="#118dff"/><rect x="485.46" y="445.00" width="12.2" height="0.50" fill="#118dff"/><rect x="500.64" y="445.00" width="12.2" height="0.50" fill="#118dff"/></svg>
<span class="t" style="left:302.62px;top:384.00px;font-size:6.6px;color:#fff;transform:scaleX(0.9200);">3815</span>
<span class="t" style="left:317.80px;top:386.00px;font-size:6.6px;color:#fff;transform:scaleX(0.9200);">3638</span>
<span class="t" style="left:332.98px;top:389.00px;font-size:6.6px;color:#fff;transform:scaleX(0.9200);">3455</span>
<span class="t" style="left:348.16px;top:410.00px;font-size:6.6px;color:#fff;transform:scaleX(0.9200);">1940</span>
<span class="t" style="left:363.34px;top:422.00px;font-size:6.6px;color:#fff;transform:scaleX(0.9200);">1059</span>
<span class="t" style="left:380.22px;top:427.00px;font-size:6.6px;color:#fff;transform:scaleX(0.9200);">652</span>
<span class="t" style="left:395.40px;top:428.00px;font-size:6.6px;color:#fff;transform:scaleX(0.9200);">573</span>
<span class="t" style="left:410.58px;top:429.00px;font-size:6.6px;color:#fff;transform:scaleX(0.9200);">496</span>
<span class="t" style="left:425.76px;top:433.00px;font-size:6.6px;color:#fff;transform:scaleX(0.9200);">260</span>
<span class="t" style="left:440.94px;top:434.00px;font-size:6.6px;color:#fff;transform:scaleX(0.9200);">182</span>
<span class="t" style="left:457.81px;top:435.00px;font-size:6.6px;color:#fff;transform:scaleX(0.9200);">90</span>
<span class="t" style="left:472.99px;top:436.00px;font-size:6.6px;color:#fff;transform:scaleX(0.9200);">32</span>
<span class="t" style="left:488.17px;top:436.00px;font-size:6.6px;color:#fff;transform:scaleX(0.9200);">23</span>
<span class="t" style="left:505.05px;top:436.00px;font-size:6.6px;color:#fff;transform:scaleX(0.9200);">9</span>
<span class="t" style="left:278.93px;top:388.00px;font-size:6.3px;color:#fff;transform:scaleX(0.9400);">4000</span>
<span class="t" style="left:278.93px;top:415.00px;font-size:6.3px;color:#fff;transform:scaleX(0.9400);">2000</span>
<span class="t" style="left:288.73px;top:443.00px;font-size:6.3px;color:#fff;transform:scaleX(0.9400);">0</span>
<span class="t" style="left:274.31px;top:447.30px;font-size:6.400px;color:#fff;transform-origin:100% 50%;transform:rotate(-36deg)">O/s Guards</span>
<span class="t" style="left:288.54px;top:447.30px;font-size:6.400px;color:#fff;transform-origin:100% 50%;transform:rotate(-36deg)">O/s Officers</span>
<span class="t" style="left:321.67px;top:447.30px;font-size:6.400px;color:#fff;transform-origin:100% 50%;transform:rotate(-36deg)">OG-3</span>
<span class="t" style="left:336.85px;top:447.30px;font-size:6.400px;color:#fff;transform-origin:100% 50%;transform:rotate(-36deg)">OG-2</span>
<span class="t" style="left:352.03px;top:447.30px;font-size:6.400px;color:#fff;transform-origin:100% 50%;transform:rotate(-36deg)">OG-1</span>
<span class="t" style="left:370.05px;top:447.30px;font-size:6.400px;color:#fff;transform-origin:100% 50%;transform:rotate(-36deg)">NCL</span>
<span class="t" style="left:385.70px;top:447.30px;font-size:6.400px;color:#fff;transform-origin:100% 50%;transform:rotate(-36deg)">AVP</span>
<span class="t" style="left:400.41px;top:447.30px;font-size:6.400px;color:#fff;transform-origin:100% 50%;transform:rotate(-36deg)">CLR</span>
<span class="t" style="left:419.84px;top:447.30px;font-size:6.400px;color:#fff;transform-origin:100% 50%;transform:rotate(-36deg)">VP</span>
<span class="t" style="left:403.96px;top:447.30px;font-size:6.400px;color:#fff;transform-origin:100% 50%;transform:rotate(-36deg)">O/s Office B...</span>
<span class="t" style="left:445.94px;top:447.30px;font-size:6.400px;color:#fff;transform-origin:100% 50%;transform:rotate(-36deg)">SVP</span>
<span class="t" style="left:461.12px;top:447.30px;font-size:6.400px;color:#fff;transform-origin:100% 50%;transform:rotate(-36deg)">EVP</span>
<span class="t" style="left:474.89px;top:447.30px;font-size:6.400px;color:#fff;transform-origin:100% 50%;transform:rotate(-36deg)">CON</span>
<span class="t" style="left:487.23px;top:447.30px;font-size:6.400px;color:#fff;transform-origin:100% 50%;transform:rotate(-36deg)">SEVP</span>
<div class="a" style="left:526px;top:365px;width:154px;height:115px;border:1px solid #486a8c"></div>
<span class="t" style="left:564.30px;top:366.00px;font-size:8.3px;color:#fff;font-weight:bold;transform:scaleX(0.9528);">Overseas Headcount</span>
<span class="t" style="left:531.75px;top:381.00px;font-size:6.7px;color:#fff;transform:scaleX(1.0854);">Location</span>
<span class="t" style="left:565.25px;top:381.00px;font-size:6.7px;color:#fff;transform:scaleX(1.0255);">Expat</span>
<span class="t" style="left:589.25px;top:381.00px;font-size:6.7px;color:#fff;">Local</span>
<span class="t" style="left:611.25px;top:381.00px;font-size:6.7px;color:#fff;transform:scaleX(1.0422);">Secondees</span>
<span class="t" style="left:652.75px;top:381.00px;font-size:6.7px;color:#fff;font-weight:bold;transform:scaleX(1.1009);">Total</span>
<div class="a" style="left:529.25px;top:393.3px;width:143.7px;height:0.9px;background:#1c6fc4;"></div>
<svg style="left:0;top:0" width="984" height="529"><g stroke="#173a63" stroke-width="0.700"><path d="M562.100 395V452M587 395V452M611.100 395V452"/></g><rect x="565.100" y="394.8" width="18.70" height="12.200" fill="#118dff"/><rect x="588.600" y="394.8" width="7.98" height="12.200" fill="#118dff"/><rect x="565.100" y="408.55" width="2.84" height="12.200" fill="#118dff"/><rect x="588.600" y="408.55" width="1.83" height="12.200" fill="#118dff"/><rect x="565.100" y="422.3" width="3.99" height="12.200" fill="#118dff"/><rect x="588.600" y="422.3" width="0.47" height="12.200" fill="#118dff"/><rect x="565.100" y="436.05" width="1.23" height="12.200" fill="#118dff"/><rect x="588.600" y="436.05" width="2.91" height="12.200" fill="#118dff"/></svg>
<span class="t" style="left:531.75px;top:398.00px;font-size:7.8px;color:#fff;">AE</span>
<span class="t" style="left:569.11px;top:397.00px;font-size:8.6px;color:#fff;">244</span>
<span class="t" style="left:592.00px;top:397.00px;font-size:8.6px;color:#fff;">118</span>
<span class="t" style="left:642.70px;top:397.00px;font-size:8.6px;color:#fff;">5</span>
<span class="t" style="left:654.20px;top:397.00px;font-size:8.6px;color:#fff;font-weight:bold;transform:scaleX(1.0979);">367</span>
<span class="t" style="left:531.75px;top:412.00px;font-size:7.8px;color:#fff;">BH</span>
<span class="t" style="left:573.91px;top:411.00px;font-size:8.6px;color:#fff;">37</span>
<span class="t" style="left:596.16px;top:411.00px;font-size:8.6px;color:#fff;">27</span>
<span class="t" style="left:642.70px;top:411.00px;font-size:8.6px;color:#fff;">1</span>
<span class="t" style="left:659.50px;top:411.00px;font-size:8.6px;color:#fff;font-weight:bold;transform:scaleX(1.0945);">65</span>
<span class="t" style="left:531.75px;top:426.00px;font-size:7.8px;color:#fff;">QT</span>
<span class="t" style="left:573.91px;top:425.00px;font-size:8.6px;color:#fff;">52</span>
<span class="t" style="left:600.95px;top:425.00px;font-size:8.6px;color:#fff;">7</span>
<span class="t" style="left:642.70px;top:425.00px;font-size:8.6px;color:#fff;">0</span>
<span class="t" style="left:659.50px;top:425.00px;font-size:8.6px;color:#fff;font-weight:bold;transform:scaleX(1.0945);">59</span>
<span class="t" style="left:531.75px;top:439.00px;font-size:7.8px;color:#fff;">YN</span>
<span class="t" style="left:573.91px;top:438.00px;font-size:8.6px;color:#fff;">16</span>
<span class="t" style="left:596.16px;top:438.00px;font-size:8.6px;color:#fff;">43</span>
<span class="t" style="left:642.70px;top:438.00px;font-size:8.6px;color:#fff;">1</span>
<span class="t" style="left:659.50px;top:438.00px;font-size:8.6px;color:#fff;font-weight:bold;transform:scaleX(1.0945);">60</span>
<span class="t" style="left:531.75px;top:453.00px;font-size:7.8px;color:#fff;font-weight:bold;">Total</span>
<span class="t" style="left:567.70px;top:452.00px;font-size:8.6px;color:#fff;font-weight:bold;transform:scaleX(1.0979);">349</span>
<span class="t" style="left:589.95px;top:452.00px;font-size:8.6px;color:#fff;font-weight:bold;transform:scaleX(1.0979);">195</span>
<span class="t" style="left:642.70px;top:452.00px;font-size:8.6px;color:#fff;font-weight:bold;">7</span>
<span class="t" style="left:654.20px;top:452.00px;font-size:8.6px;color:#fff;font-weight:bold;transform:scaleX(1.0979);">551</span>
<!-- sec_panes -->
<svg style="left:705.300px;top:130.500px" width="5" height="8" viewBox="0 0 5 8" fill="none" stroke="#605e5c" stroke-width="0.900"><path d="M4.300 0.500L0.800 4l3.500 3.500"/></svg>
<svg style="left:706px;top:164.500px" width="8" height="9" viewBox="0 0 8 9" fill="none" stroke="#605e5c" stroke-width="0.800"><path d="M7.500 0.500v8l-5-2.800v-2.400zM2.500 4.500h-2.500"/></svg>
<span class="t" style="left:702.600px;top:182px;font-size:10.800px;font-weight:bold;color:#323130;transform-origin:0 0;transform:rotate(90deg) translate(0,-100%) scaleX(0.92);letter-spacing:0.200px">Filters</span>
<span class="t" style="left:729.60px;top:131.00px;font-size:11.4px;color:#323130;transform:scaleX(1.0325);-webkit-text-stroke:0.250px #323130;">Visualizations</span>
<svg style="left:838px;top:131px" width="5" height="8" viewBox="0 0 5 8" fill="none" stroke="#605e5c" stroke-width="0.900"><path d="M0.700 0.500L4.200 4l-3.500 3.500"/></svg>
<svg style="left:727.70px;top:157.30px" width="12" height="12" viewBox="0 0 12 12" fill="none" stroke="#6b6967" stroke-width="0.900"><path d="M0.500 0v11.500h11.500"/><rect x="1" y="1.500" width="7" height="2.500" fill="#74b5e8" stroke="#2b88d8"/><rect x="1" y="5" width="5" height="2.500" fill="#d6d4d2" stroke="#8a8886"/><rect x="1" y="8.500" width="9.500" height="2.500" fill="#d6d4d2" stroke="#8a8886"/></svg>
<svg style="left:748.00px;top:157.30px" width="12" height="12" viewBox="0 0 12 12" fill="none" stroke="#6b6967" stroke-width="0.900"><path d="M0.500 0v11.500h11.500"/><rect x="2" y="4" width="3" height="7.500" fill="#74b5e8" stroke="#2b88d8"/><rect x="6" y="2" width="2.500" height="9.500" fill="#d6d4d2" stroke="#8a8886"/><rect x="9" y="1" width="2.500" height="10.500" fill="#d6d4d2" stroke="#8a8886"/></svg>
<svg style="left:768.50px;top:157.30px" width="12" height="12" viewBox="0 0 12 12" fill="none" stroke="#6b6967" stroke-width="0.900"><path d="M0.500 0v11.500h11.500"/><rect x="1" y="1" width="10" height="2.500" fill="#74b5e8" stroke="#2b88d8"/><rect x="1" y="4.700" width="6" height="2.500" fill="#d6d4d2" stroke="#8a8886"/><rect x="1" y="8.400" width="8" height="2.500" fill="#d6d4d2" stroke="#8a8886"/></svg>
<svg style="left:789.00px;top:157.30px" width="12" height="12" viewBox="0 0 12 12" fill="none" stroke="#6b6967" stroke-width="0.900"><path d="M0.500 0v11.500h11.500"/><rect x="1.500" y="1" width="3" height="10.500" fill="#74b5e8" stroke="#2b88d8"/><rect x="5.500" y="5" width="2.500" height="6.500" fill="#d6d4d2" stroke="#8a8886"/><rect x="9" y="3" width="2.500" height="8.500" fill="#d6d4d2" stroke="#8a8886"/></svg>
<svg style="left:809.30px;top:157.30px" width="12" height="12" viewBox="0 0 12 12" fill="none" stroke="#6b6967" stroke-width="0.900"><path d="M0.500 0v11.500"/><rect x="1" y="1" width="10.500" height="2.500" fill="#74b5e8" stroke="#2b88d8"/><rect x="1" y="4.700" width="10.500" height="2.500" fill="#d6d4d2" stroke="#8a8886"/><rect x="1" y="8.400" width="10.500" height="2.500" fill="#d6d4d2" stroke="#8a8886"/></svg>
<svg style="left:829.70px;top:157.30px" width="12" height="12" viewBox="0 0 12 12" fill="none" stroke="#6b6967" stroke-width="0.900"><path d="M0.500 0v11.500h11.500"/><rect x="2" y="1" width="3" height="10.500" fill="#74b5e8" stroke="#2b88d8"/><rect x="6" y="1" width="2.500" height="10.500" fill="#d6d4d2" stroke="#8a8886"/><rect x="9" y="1" width="2.500" height="10.500" fill="#d6d4d2" stroke="#8a8886"/></svg>
<svg style="left:727.70px;top:174.70px" width="12" height="12" viewBox="0 0 12 12" fill="none" stroke="#6b6967" stroke-width="0.900"><path d="M0.500 0v11.500h11.500"/><path d="M1 8l3-4 2.500 3 2.500-4 3 3" stroke="#2b88d8"/><path d="M1 10l3-3 2.500 1.500 5-5"/></svg>
<svg style="left:748.00px;top:174.70px" width="12" height="12" viewBox="0 0 12 12" fill="none" stroke="#6b6967" stroke-width="0.900"><path d="M0.500 11.500l4-9 3 5 2-4.500 2.500 8.500z" fill="#faf9f8" stroke="#6b6967"/><path d="M0.500 11.500l2-4.500 3.500 2.500 2.500-4 3.500 6z" fill="#74b5e8" stroke="#2b88d8"/></svg>
<svg style="left:768.50px;top:174.70px" width="12" height="12" viewBox="0 0 12 12" fill="none" stroke="#6b6967" stroke-width="0.900"><path d="M0.500 0v11.500h11.500"/><path d="M1 4l3 3 3-3.500 4.500 3v4.500h-10.500z" fill="#74b5e8" stroke="#2b88d8"/><path d="M1 2l3 3 3-3 4.500 2.500" stroke="#2b88d8"/></svg>
<svg style="left:789.00px;top:174.70px" width="12" height="12" viewBox="0 0 12 12" fill="none" stroke="#6b6967" stroke-width="0.900"><path d="M0.500 0v11.500h11.500"/><rect x="2" y="2" width="2.500" height="9.500" fill="#74b5e8" stroke="#2b88d8"/><rect x="5.500" y="4" width="2.500" height="7.500" fill="#d6d4d2" stroke="#8a8886"/><rect x="9" y="1" width="2.500" height="10.500" fill="#74b5e8" stroke="#2b88d8"/><path d="M1 8l3-3 3 2 4.500-4"/></svg>
<svg style="left:809.30px;top:174.70px" width="12" height="12" viewBox="0 0 12 12" fill="none" stroke="#6b6967" stroke-width="0.900"><path d="M0.500 0v11.500h11.500"/><rect x="2" y="6" width="2.500" height="5.500" fill="#74b5e8" stroke="#2b88d8"/><rect x="5" y="2" width="2.500" height="9.500" fill="#d6d4d2" stroke="#8a8886"/><rect x="8.500" y="4" width="2.500" height="7.500" fill="#74b5e8" stroke="#2b88d8"/><path d="M1 5l3-1 3 3 4.500-4"/></svg>
<svg style="left:829.70px;top:174.70px" width="12" height="12" viewBox="0 0 12 12" fill="none" stroke="#6b6967" stroke-width="0.900"><path d="M0.500 0v11.500h11.500"/><path d="M1 2l3 4 3-1 4.500-3.500v6l-4.500 3-3-1-3 1z" fill="#74b5e8" stroke="#2b88d8"/><path d="M1 7l3 2.500 3-1.500 4.500 0.500v2.500h-10.500z" fill="#e8833a" stroke="#e8833a" stroke-width="0.400"/></svg>
<svg style="left:727.70px;top:192.00px" width="12" height="12" viewBox="0 0 12 12" fill="none" stroke="#6b6967" stroke-width="0.900"><path d="M0.500 0v11.500h11.500"/><rect x="2" y="5" width="2.500" height="6.500" fill="#d6d4d2" stroke="#8a8886"/><rect x="5.500" y="2" width="2.500" height="9.500" fill="#74b5e8" stroke="#2b88d8"/><rect x="9" y="1" width="2.500" height="10.500" fill="#d6d4d2" stroke="#8a8886"/></svg>
<svg style="left:748.00px;top:192.00px" width="12" height="12" viewBox="0 0 12 12" fill="none" stroke="#6b6967" stroke-width="0.900"><path d="M0.500 1h11v2.500h-11zM1.500 4.500h9v2.500h-9zM3 8h6v2.500h-6z" fill="#2b88d8" stroke="#2b88d8"/></svg>
<svg style="left:768.50px;top:192.00px" width="12" height="12" viewBox="0 0 12 12" fill="none" stroke="#6b6967" stroke-width="0.900"><path d="M0.500 0v11.500h11.500"/><g fill="#2b88d8" stroke="none"><rect x="3" y="3" width="1.800" height="1.800"/><rect x="6.500" y="5.500" width="1.800" height="1.800"/><rect x="9.500" y="7.500" width="1.800" height="1.800"/><rect x="5" y="1" width="1.800" height="1.800"/></g><g fill="#323130" stroke="none"><rect x="9.500" y="1" width="1.800" height="1.800"/><rect x="3" y="8" width="1.800" height="1.800"/></g></svg>
<svg style="left:789.00px;top:192.00px" width="12" height="12" viewBox="0 0 12 12" fill="none" stroke="#6b6967" stroke-width="0.900"><circle cx="6" cy="6" r="5.400" fill="#faf9f8"/><path d="M6 6V0.600A5.400 5.400 0 0 1 10.700 8.700z" fill="#74b5e8" stroke="#2b88d8"/></svg>
<svg style="left:809.30px;top:192.00px" width="12" height="12" viewBox="0 0 12 12" fill="none" stroke="#6b6967" stroke-width="0.900"><circle cx="6" cy="6" r="4.100" stroke="#2b88d8" stroke-width="2.800"/><path d="M6 1.900A4.100 4.100 0 0 0 2.100 7" stroke="#a6cdf0" stroke-width="2.200"/><circle cx="6" cy="6" r="5.500" stroke="#2b88d8" stroke-width="0.500"/></svg>
<svg style="left:829.70px;top:192.00px" width="12" height="12" viewBox="0 0 12 12" fill="none" stroke="#6b6967" stroke-width="0.900"><rect x="0.500" y="0.500" width="5.500" height="6.500" fill="#74b5e8" stroke="#2b88d8"/><rect x="0.500" y="7" width="5.500" height="4.500" fill="#74b5e8" stroke="#2b88d8"/><rect x="6" y="0.500" width="5.500" height="4.500"/><rect x="6" y="5" width="5.500" height="6.500"/></svg>
<svg style="left:727.70px;top:209.30px" width="12" height="12" viewBox="0 0 12 12" fill="none" stroke="#6b6967" stroke-width="0.900"><circle cx="6" cy="5" r="4.300" fill="#faf9f8" stroke="#484644" stroke-width="1.400"/><path d="M4.200 3.500c1-1 2.500-0.500 2.500 0.500s-1.500 1-1 2.500" stroke="#33a05a" stroke-width="1.200"/><path d="M7.500 5.500l1 1.500" stroke="#2b88d8" stroke-width="1.200"/><path d="M3 11.500h6M6 9.500v2" stroke="#484644"/></svg>
<svg style="left:748.00px;top:209.30px" width="12" height="12" viewBox="0 0 12 12" fill="none" stroke="#6b6967" stroke-width="0.900"><path d="M0.500 1.500l3 1 2.500-1.500 2.500 1.500 3-1v6.500c-1 2-3.500 3-5.500 3.500c-2-0.500-4.500-1.500-5.500-3.500z" fill="#d6d4d2" stroke="#2b88d8"/><path d="M0.500 1.500l3 1 2.500-1.500v4.500l-5.500 1z" fill="#74b5e8" stroke="#2b88d8" stroke-width="0.600"/><path d="M6 6.500l5.500-1v2.500c-1 2-3.500 3-5.500 3.500z" fill="#74b5e8" stroke="#2b88d8" stroke-width="0.600"/></svg>
<svg style="left:768.50px;top:209.30px" width="12" height="12" viewBox="0 0 12 12" fill="none" stroke="#6b6967" stroke-width="0.900"><path d="M0.500 1.500l3 1 2.500-1.500 2.500 1.500 3-1v6.500c-1 2-3.500 3-5.500 3.500c-2-0.500-4.500-1.500-5.500-3.500z" fill="#faf9f8" stroke="#2b88d8"/><path d="M6 1.500v9M0.500 6h11" stroke="#2b88d8"/></svg>
<svg style="left:789.00px;top:209.30px" width="12" height="12" viewBox="0 0 12 12" fill="none" stroke="#6b6967" stroke-width="0.900"><path d="M6 0l5 11.500-5-3.500-5 3.500z" fill="#2b88d8" stroke="#2b88d8"/></svg>
<svg style="left:809.30px;top:209.30px" width="12" height="12" viewBox="0 0 12 12" fill="none" stroke="#6b6967" stroke-width="0.900"><path d="M1 9.500a5 5 0 0 1 5-5" stroke="#605e5c" stroke-width="1.800"/><path d="M6 4.500a5 5 0 0 1 5 5" stroke="#2b88d8" stroke-width="1.800"/><path d="M5 9.500l3-3.500" stroke="#484644" stroke-width="1.100"/></svg>
<svg style="left:829.70px;top:209.30px" width="12" height="12" viewBox="0 0 12 12" fill="none" stroke="#6b6967" stroke-width="0.900"><rect x="0.500" y="2" width="11" height="8" fill="#e4eaf2" stroke="#8a8886"/><path d="M3 7.500v-3M5 4.500h2v1.500h-2v1.500h2M8.500 4.500h1.500v3h-1.500M8.500 6h1.500" stroke="#2b88d8" stroke-width="0.700"/><path d="M0.500 10h11" stroke="#605e5c" stroke-width="1.200"/></svg>
<svg style="left:727.70px;top:226.90px" width="12" height="12" viewBox="0 0 12 12" fill="none" stroke="#6b6967" stroke-width="0.900"><rect x="0.500" y="0.500" width="11" height="11" fill="#faf9f8"/><path d="M2.500 3.500h7M2.500 6h5M2.500 8.500h6" stroke="#2b88d8" stroke-width="1.200"/></svg>
<svg style="left:748.00px;top:226.90px" width="12" height="12" viewBox="0 0 12 12" fill="none" stroke="#6b6967" stroke-width="0.900"><rect x="0.500" y="1.500" width="11" height="9" fill="#faf9f8"/><path d="M2 7.500l2-3.500 2 3.500z" fill="#33a05a" stroke="none"/><path d="M6.500 4l2 3.500 2-3.500z" fill="#d13438" stroke="none"/></svg>
<svg style="left:768.50px;top:226.90px" width="12" height="12" viewBox="0 0 12 12" fill="none" stroke="#6b6967" stroke-width="0.900"><rect x="0.500" y="0.500" width="11" height="10" fill="#faf9f8"/><path d="M0.500 3h11M2.500 5.500h3M2.500 8h2"/><path d="M6.500 6.500h5l-2 2.500v2.500h-1v-2.500z" fill="#faf9f8" stroke="#323130"/></svg>
<svg style="left:789.00px;top:226.90px" width="12" height="12" viewBox="0 0 12 12" fill="none" stroke="#6b6967" stroke-width="0.900"><rect x="0.500" y="0.500" width="11" height="11" fill="#faf9f8"/><path d="M0.500 3.500h11M0.500 6.200h11M0.500 8.900h11M4.200 0.500v11M7.800 0.500v11"/></svg>
<svg style="left:809.30px;top:226.90px" width="12" height="12" viewBox="0 0 12 12" fill="none" stroke="#6b6967" stroke-width="0.900"><rect x="0.500" y="0.500" width="11" height="11" fill="#74b5e8" stroke="#2b88d8"/><rect x="4.200" y="3.500" width="7.300" height="8" fill="#faf9f8" stroke="none"/><path d="M0.500 3.500h11M0.500 6.200h11M0.500 8.900h11M4.200 0.500v11M7.800 0.500v11" stroke="#2b88d8"/></svg>
<svg style="left:748.00px;top:244.20px" width="12" height="12" viewBox="0 0 12 12" fill="none" stroke="#6b6967" stroke-width="0.900"><path d="M0.500 0v11.500h11.500M2 2.500h7M2 5.500h4.500M2 8.500h6"/><circle cx="10" cy="2.500" r="1.200" fill="#2b88d8" stroke="#2b88d8"/><circle cx="7.500" cy="5.500" r="1.200" fill="#2b88d8" stroke="#2b88d8"/></svg>
<svg style="left:768.50px;top:244.20px" width="12" height="12" viewBox="0 0 12 12" fill="none" stroke="#6b6967" stroke-width="0.900"><path d="M0.500 5h3v2.500h-3z" fill="#2b88d8" stroke="#2b88d8"/><path d="M3.500 6.200h2.500M6 1.800v9M6 1.800h2M6 4.800h2M6 7.800h2M6 10.800h2" stroke="#2b88d8"/><g fill="#2b88d8" stroke="#2b88d8"><rect x="8" y="0.800" width="3.500" height="2"/><rect x="8" y="3.800" width="3.500" height="2"/><rect x="8" y="6.800" width="3.500" height="2"/><rect x="8" y="9.800" width="3.500" height="1.700"/></g></svg>
<svg style="left:789.00px;top:244.20px" width="12" height="12" viewBox="0 0 12 12" fill="none" stroke="#6b6967" stroke-width="0.900"><path d="M0.500 1h11v7.500h-7l-2.500 2.500v-2.500h-1.500z" fill="#faf9f8" stroke="#2b88d8"/></svg>
<svg style="left:809.30px;top:244.20px" width="12" height="12" viewBox="0 0 12 12" fill="none" stroke="#6b6967" stroke-width="0.900"><path d="M1.500 0.500h6l3 3v8h-9z" fill="#faf9f8" stroke="#323130"/><path d="M3.500 5.500h2.500M3.500 7.500h5" stroke="#2b88d8"/></svg>
<svg style="left:829.70px;top:244.20px" width="12" height="12" viewBox="0 0 12 12" fill="none" stroke="#6b6967" stroke-width="0.900"><rect x="1.500" y="1.500" width="10" height="10" fill="#faf9f8" stroke="#2b88d8" stroke-width="1.300"/><path d="M4 9.500v-2h2.500v-3h3" stroke="#2b88d8" stroke-width="1.200"/><path d="M0.500 0.500h4v4l-2 1.500-2-1.500z" fill="#e8833a" stroke="#e8833a"/><circle cx="10.500" cy="9.500" r="1.300" fill="#e8833a" stroke="none"/></svg>
<svg style="left:727.20px;top:261.50px" width="13" height="13" viewBox="0 0 13 13" fill="none" stroke="#6b6967" stroke-width="0.900"><path d="M6.500 0.300l6.200 6.200-6.200 6.200-6.200-6.200zM3.400 3.400l6.200 6.200M9.600 3.400l-6.200 6.200" stroke="#323130" stroke-width="1"/></svg>
<span class="t" style="left:832.20px;top:229.00px;font-size:11.5px;color:#2b88d8;font-weight:bold;transform:scaleX(0.8429);">R</span>
<span class="t" style="left:727.45px;top:246.00px;font-size:11.5px;color:#2b88d8;font-weight:bold;transform:scaleX(0.8886);">Py</span>
<svg style="left:748px;top:267px" width="12" height="2" viewBox="0 0 12 2"><g fill="#2b88d8"><rect x="0.500" y="0.300" width="1.300" height="1.300"/><rect x="5" y="0.300" width="1.300" height="1.300"/><rect x="9.500" y="0.300" width="1.300" height="1.300"/></g></svg>
<div class="a" style="left:722px;top:277px;width:129px;height:1px;background:#e1dfdd;"></div>
<svg style="left:736px;top:283px" width="16" height="15" viewBox="0 0 16 15" fill="none" stroke="#323130" stroke-width="0.900"><path d="M1 0.500h11" /><rect x="0.500" y="3" width="15" height="11.500" stroke-dasharray="1.200 1"/><path d="M0.500 6.800h15M0.500 10.600h15" stroke-dasharray="1.200 1"/></svg>
<svg style="left:766px;top:283px" width="14" height="16" viewBox="0 0 14 16" fill="none" stroke="#323130" stroke-width="0.900"><rect x="0.500" y="0.500" width="10.500" height="3.500" rx="1"/><path d="M11 2.200h2.500v4h-7.500v3"/><rect x="4.800" y="9" width="2.500" height="6.500"/></svg>
<div class="a" style="left:729.6px;top:301px;width:29px;height:2.7px;background:#f2c811;border-radius:1.500px"></div>
<span class="t" style="left:729.60px;top:310.00px;font-size:9px;color:#323130;transform:scaleX(0.9124);">Values</span>
<div class="a" style="left:723px;top:323.700px;width:124.500px;height:19.500px;background:#fff;border:1px dashed #dad8d6"></div>
<span class="t" style="left:731.40px;top:330.00px;font-size:9px;color:#323130;transform:scaleX(0.9743);">Add data fields here</span>
<span class="t" style="left:731.40px;top:356.00px;font-size:11.4px;color:#323130;transform:scaleX(1.0926);-webkit-text-stroke:0.250px #323130;">Drill through</span>
<span class="t" style="left:727.70px;top:381.00px;font-size:9px;color:#323130;transform:scaleX(0.9597);">Cross-report</span>
<span class="t" style="left:733.90px;top:402.00px;font-size:9px;color:#323130;transform:scaleX(1.0137);">Off</span>
<svg style="left:748px;top:401.500px" width="24" height="10" viewBox="0 0 24 10" fill="none" stroke="#484644" stroke-width="1.100"><circle cx="5" cy="5" r="3.500"/><path d="M8.500 5h14"/></svg>
<span class="t" style="left:727.70px;top:428.00px;font-size:9px;color:#323130;transform:scaleX(0.9464);">Keep all filters</span>
<span class="t" style="left:733.90px;top:449.00px;font-size:9px;color:#323130;transform:scaleX(0.9162);">On</span>
<svg style="left:748px;top:448px" width="24" height="10" viewBox="0 0 24 10" fill="#484644" stroke="#484644" stroke-width="1.100"><path d="M1 5h13"/><circle cx="17.800" cy="5" r="4"/></svg>
<div class="a" style="left:723px;top:468.200px;width:124.500px;height:18.500px;background:#fff;border:1px dashed #dad8d6"></div>
<span class="t" style="left:730.20px;top:474.00px;font-size:9px;color:#323130;">Add drill-through fields here</span>
<span class="t" style="left:861.40px;top:131.00px;font-size:11.4px;color:#323130;-webkit-text-stroke:0.250px #323130;">Fields</span>
<svg style="left:969px;top:131px" width="5" height="8" viewBox="0 0 5 8" fill="none" stroke="#605e5c" stroke-width="0.900"><path d="M0.700 0.500L4.200 4l-3.500 3.500"/></svg>
<div class="a" style="left:855px;top:153px;width:125.500px;height:19.500px;background:#fff;border:1px solid #8a8886;border-radius:1px"></div>
<svg style="left:861px;top:157.500px" width="10.500" height="10.500" viewBox="0 0 9 9" fill="none" stroke="#484644" stroke-width="0.900"><circle cx="5.500" cy="3.500" r="2.800"/><path d="M3.500 5.500L0.500 8.500"/></svg>
<span class="t" style="left:876.70px;top:159.00px;font-size:9.4px;color:#484644;transform:scaleX(0.9930);">Search</span>
<div class="a" style="left:852px;top:177px;width:131px;height:1px;background:#e1dfdd;"></div>
<svg style="left:859.500px;top:189.80px" width="5" height="8" viewBox="0 0 5 8" fill="none" stroke="#605e5c" stroke-width="0.800"><path d="M0.700 0.500L4.200 4l-3.500 3.500"/></svg>
<svg style="left:868px;top:188.80px" width="10" height="9" viewBox="0 0 10 9" fill="none" stroke="#323130" stroke-width="0.900"><rect x="0.500" y="0.500" width="9" height="8"/><path d="M0.500 2.500h9" stroke-width="1.500"/><path d="M0.500 5.500h9M3.500 2.500v6M6.500 2.500v6"/></svg>
<span class="t" style="left:882.70px;top:190.00px;font-size:9px;color:#323130;transform:scaleX(0.9008);">business</span>
<svg style="left:859.500px;top:207.30px" width="5" height="8" viewBox="0 0 5 8" fill="none" stroke="#605e5c" stroke-width="0.800"><path d="M0.700 0.500L4.200 4l-3.500 3.500"/></svg>
<svg style="left:868px;top:206.30px" width="10" height="9" viewBox="0 0 10 9" fill="none" stroke="#323130" stroke-width="0.900"><rect x="0.500" y="0.500" width="9" height="8"/><path d="M0.500 2.500h9" stroke-width="1.500"/><path d="M0.500 5.500h9M3.500 2.500v6M6.500 2.500v6"/></svg>
<span class="t" style="left:882.70px;top:207.00px;font-size:9px;color:#323130;transform:scaleX(0.9446);">company</span>
<svg style="left:859.500px;top:224.80px" width="5" height="8" viewBox="0 0 5 8" fill="none" stroke="#605e5c" stroke-width="0.800"><path d="M0.700 0.500L4.200 4l-3.500 3.500"/></svg>
<svg style="left:868px;top:223.80px" width="10" height="9" viewBox="0 0 10 9" fill="none" stroke="#323130" stroke-width="0.900"><rect x="0.500" y="0.500" width="9" height="8"/><path d="M0.500 2.500h9" stroke-width="1.500"/><path d="M0.500 5.500h9M3.500 2.500v6M6.500 2.500v6"/></svg>
<span class="t" style="left:882.70px;top:225.00px;font-size:9px;color:#323130;transform:scaleX(0.9426);">hrdb1</span>
<svg style="left:859.500px;top:242.30px" width="5" height="8" viewBox="0 0 5 8" fill="none" stroke="#605e5c" stroke-width="0.800"><path d="M0.700 0.500L4.200 4l-3.500 3.500"/></svg>
<svg style="left:868px;top:241.30px" width="10" height="9" viewBox="0 0 10 9" fill="none" stroke="#323130" stroke-width="0.900"><rect x="0.500" y="0.500" width="9" height="8"/><path d="M0.500 2.500h9" stroke-width="1.500"/><path d="M0.500 5.500h9M3.500 2.500v6M6.500 2.500v6"/></svg>
<span class="t" style="left:882.70px;top:242.00px;font-size:9px;color:#323130;transform:scaleX(0.9670);">location</span>
<svg style="left:859.500px;top:259.80px" width="5" height="8" viewBox="0 0 5 8" fill="none" stroke="#605e5c" stroke-width="0.800"><path d="M0.700 0.500L4.200 4l-3.500 3.500"/></svg>
<svg style="left:868px;top:258.80px" width="10" height="9" viewBox="0 0 10 9" fill="none" stroke="#323130" stroke-width="0.900"><rect x="0.500" y="0.500" width="9" height="8"/><path d="M0.500 2.500h9" stroke-width="1.500"/><path d="M0.500 5.500h9M3.500 2.500v6M6.500 2.500v6"/></svg>
<span class="t" style="left:882.70px;top:260.00px;font-size:9px;color:#323130;transform:scaleX(0.9478);">locmap</span>
<!-- sec_footer -->
<div class="a" style="left:0px;top:487px;width:721px;height:1px;background:#e6e4e2;"></div>
<svg style="left:25.500px;top:495px" width="4" height="6" viewBox="0 0 4 6" fill="#c8c6c4" stroke="none"><path d="M3.500 0.300L0.500 3l3 2.700z"/></svg>
<svg style="left:41.500px;top:495px" width="4" height="6" viewBox="0 0 4 6" fill="#c8c6c4" stroke="none"><path d="M0.500 0.300L3.500 3l-3 2.700z"/></svg>
<div class="a" style="left:49.8px;top:487px;width:73.7px;height:24px;background:#ffffff;"></div>
<div class="a" style="left:49.8px;top:508.2px;width:73.7px;height:2.8px;background:#f2c811;"></div>
<span class="t" style="left:64.70px;top:493.00px;font-size:9.6px;color:#201f1e;transform:scaleX(0.9236);-webkit-text-stroke:0.200px #201f1e;">Headcount</span>
<span class="t" style="left:138.00px;top:493.00px;font-size:9.6px;color:#323130;transform:scaleX(0.8956);">Decompose</span>
<div class="a" style="left:198.5px;top:486px;width:1px;height:25px;background:#e1dfdd;"></div>
<div class="a" style="left:254.7px;top:486px;width:1px;height:25px;background:#e1dfdd;"></div>
<svg style="left:208.5px;top:494.500px" width="10" height="8" viewBox="0 0 10 8" fill="none" stroke="#605e5c" stroke-width="0.800"><path d="M0.500 4.500c2-4 6.500-4 8.500 0"/><circle cx="4.800" cy="4.800" r="1.700"/><path d="M1 0.500l8 7"/></svg>
<span class="t" style="left:219.90px;top:493.00px;font-size:9.6px;color:#323130;transform:scaleX(0.9201);">Tooltip</span>
<svg style="left:263.5px;top:494.500px" width="10" height="8" viewBox="0 0 10 8" fill="none" stroke="#605e5c" stroke-width="0.800"><path d="M0.500 4.500c2-4 6.500-4 8.500 0"/><circle cx="4.800" cy="4.800" r="1.700"/><path d="M1 0.500l8 7"/></svg>
<span class="t" style="left:275.70px;top:493.00px;font-size:9.6px;color:#323130;transform:scaleX(0.9468);">Drillthrough</span>
<div class="a" style="left:331.6px;top:486px;width:28.2px;height:24.5px;background:#f2c811;"></div>
<svg style="left:341.500px;top:494.500px" width="8" height="8" viewBox="0 0 8 8" fill="none" stroke="#605e5c" stroke-width="1.500"><path d="M4 0.500v7M0.500 4h7"/></svg>
<span class="t" style="left:-6.30px;top:516.00px;font-size:9.2px;color:#323130;transform:scaleX(0.9299);">Page 1 of 4</span>
<span class="t" style="left:839.90px;top:516.00px;font-size:9.2px;color:#323130;transform:scaleX(0.9454);">Update available (click to download)</span>
</body></html>
